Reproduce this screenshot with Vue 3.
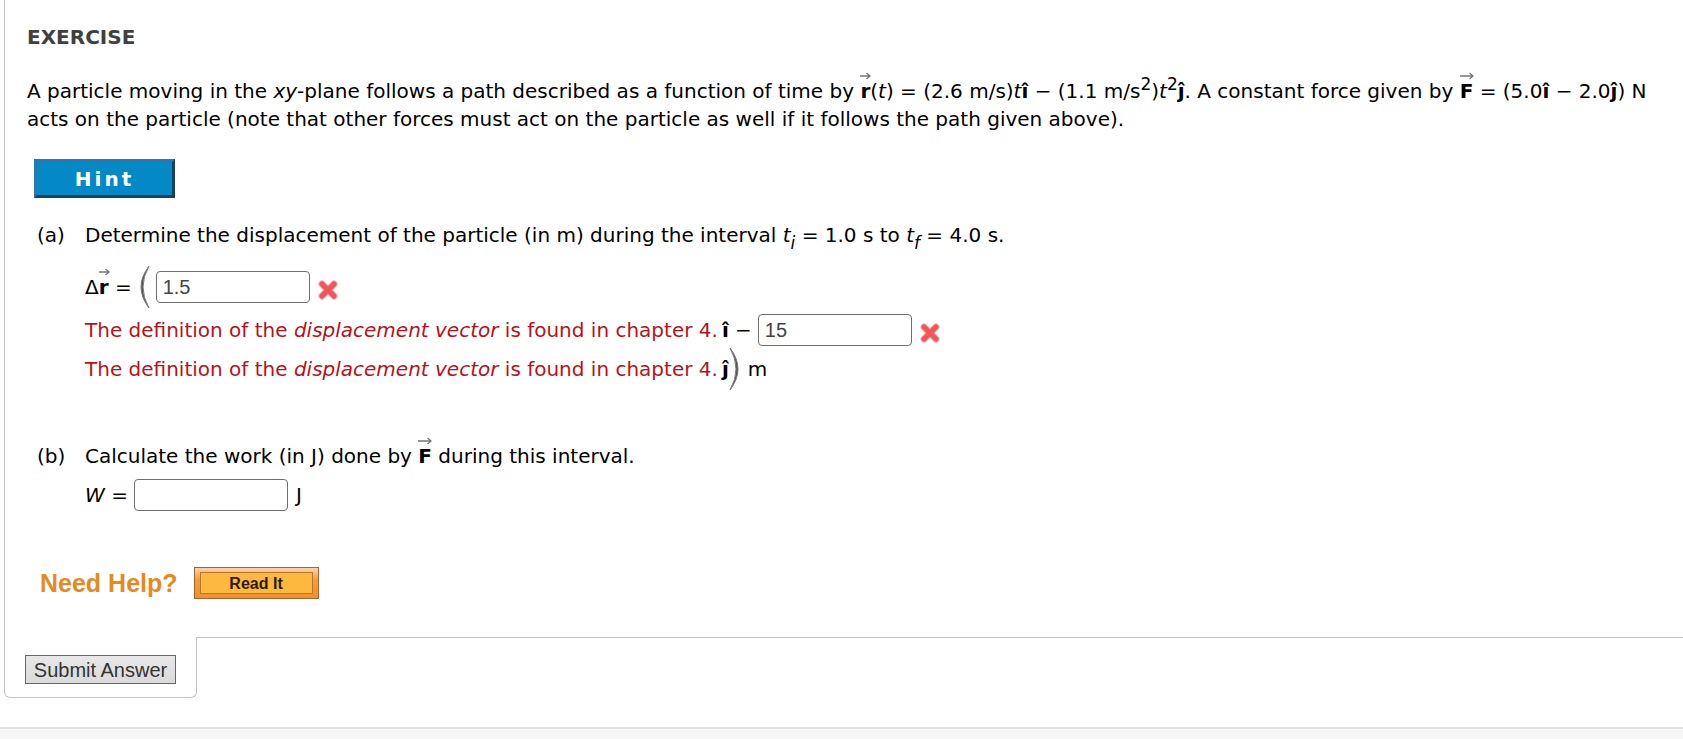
<script setup>
import { ref } from 'vue'

const answerI = ref('1.5')
const answerJ = ref('15')
const work = ref('')
</script>

<template>
  <div class="page">
    <svg class="defs" width="0" height="0" aria-hidden="true">
      <symbol id="arrow-short" viewBox="0 0 11 8">
        <path d="M0 4H10M6.5 1L10 4L6.5 7" fill="none" stroke="#777" stroke-width="1.3" />
      </symbol>
      <symbol id="arrow-long" viewBox="0 0 14 8">
        <path d="M0 4H13M9.5 1L13 4L9.5 7" fill="none" stroke="#777" stroke-width="1.3" />
      </symbol>
      <symbol id="wrong" viewBox="0 0 20 20">
        <path d="M4 4L16 16M16 4L4 16" fill="none" stroke="#f9a5a5" stroke-width="7" stroke-linecap="round" />
        <path d="M4 4L16 16M16 4L4 16" fill="none" stroke="#f05558" stroke-width="5" stroke-linecap="round" />
      </symbol>
      <symbol id="paren" viewBox="0 0 11 44">
        <path d="M10 1Q-6 22 10 43Q-2 22 10 1Z" fill="#555" stroke="#777" stroke-width="1" />
      </symbol>
    </svg>

    <main class="question">
      <h1>EXERCISE</h1>
      <p class="statement">
        A particle moving in the <i>xy</i>-plane follows a path described as a function of time by
        <span class="nowrap"><b class="vec">r<svg class="short"><use href="#arrow-short" /></svg></b>(<i>t</i>) = (2.6 m/s)<i>t</i><b>î</b> − (1.1 m/s<sup>2</sup>)<i>t</i><sup>2</sup><b>ĵ</b>.</span>
        A constant force given by
        <span class="nowrap"><b class="vec">F<svg class="long"><use href="#arrow-long" /></svg></b> = (5.0<b>î</b> − 2.0<b>ĵ</b>) N</span>
        acts on the particle (note that other forces must act on the particle as well if it follows the path given above).
      </p>
      <button type="button" class="hint">Hint</button>

      <section class="part">
        <span>(a)</span>
        <div>
          <p>Determine the displacement of the particle (in m) during the interval <i>t<sub>i</sub></i> = 1.0 s to <i>t<sub>f</sub></i> = 4.0 s.</p>
          <div class="row first">
            <label for="ans-i">Δ<b class="vec">r<svg class="short"><use href="#arrow-short" /></svg></b> =</label>
            <svg class="paren open"><use href="#paren" /></svg>
            <input id="ans-i" v-model="answerI" type="text">
            <svg class="wrong" role="img" aria-label="Incorrect"><use href="#wrong" /></svg>
          </div>
          <div class="row second">
            <span class="feedback">The definition of the <i>displacement vector</i> is found in chapter 4.</span>
            <label for="ans-j"><b>î</b> −</label>
            <input id="ans-j" v-model="answerJ" type="text">
            <svg class="wrong" role="img" aria-label="Incorrect"><use href="#wrong" /></svg>
          </div>
          <div class="row third">
            <span class="feedback">The definition of the <i>displacement vector</i> is found in chapter 4.</span>
            <b>ĵ</b>
            <svg class="paren close"><use href="#paren" /></svg>
            <span class="unit">m</span>
          </div>
        </div>
      </section>

      <section class="part">
        <span>(b)</span>
        <div>
          <p>Calculate the work (in J) done by <b class="vec">F<svg class="long"><use href="#arrow-long" /></svg></b> during this interval.</p>
          <div class="row work">
            <label for="ans-w"><i>W</i> =</label>
            <input id="ans-w" v-model="work" type="text">
            <span class="unit">J</span>
          </div>
        </div>
      </section>

      <div class="help">
        <strong>Need Help?</strong>
        <button type="button" class="read"><span>Read It</span></button>
      </div>
    </main>

    <div class="bottom">
      <div class="tab"><button type="submit" class="submit">Submit Answer</button></div>
      <div class="edge"></div>
    </div>
    <footer></footer>
  </div>
</template>

<style>
body {
  margin: 0;
  background: #fff;
}
</style>

<style scoped>
.page {
  box-sizing: border-box;
  min-height: 100vh;
  display: flex;
  flex-direction: column;
  font: 20px/28px Verdana, "DejaVu Sans", sans-serif;
  color: #000;
}
.defs {
  position: absolute;
}
.question {
  margin-left: 4px;
  padding: 23px 22px 38px;
  border-left: 1px solid #c4c4c4;
}
h1 {
  margin: 0 0 26px;
  font-size: 20px;
  line-height: 28px;
  color: #404040;
}
p {
  margin: 0;
}
.nowrap {
  white-space: nowrap;
}
sup,
sub {
  font-size: 17px;
  line-height: 0;
}
sub {
  vertical-align: -7px;
}
.vec {
  position: relative;
}
.vec svg {
  position: absolute;
  left: 0;
  top: -7px;
  height: 8px;
}
.short {
  width: 11px;
}
.long {
  width: 14px;
}
.hint {
  display: block;
  box-sizing: border-box;
  width: 141px;
  height: 39px;
  margin: 26px 0 23px 7px;
  padding: 0;
  border: 3px solid;
  border-color: #2a79ae #14425f #14425f #2a79ae;
  background: #0488c6;
  color: #fff;
  font: bold 20px/28px Verdana, "DejaVu Sans", sans-serif;
  letter-spacing: 3px;
}
.part {
  display: grid;
  grid-template-columns: 48px 1fr;
  margin-left: 10px;
  margin-bottom: 56px;
}
.part:first-of-type {
  margin-bottom: 55px;
}
.row {
  display: flex;
  align-items: center;
}
.first {
  height: 44px;
  margin-top: 16px;
}
.second {
  height: 42px;
}
.third {
  height: 36px;
}
.work {
  height: 32px;
  margin-top: 9px;
}
.row input {
  box-sizing: border-box;
  width: 154px;
  height: 32px;
  margin-left: 6px;
  padding: 0 6px;
  border: 1px solid #6f6f6f;
  border-radius: 4px;
  background: #fff;
  color: #444;
  font: 20px "Liberation Sans", Arial, sans-serif;
}
.feedback {
  margin-right: 4px;
  color: #b8111b;
}
.paren {
  flex: none;
  width: 11px;
  height: 44px;
}
.open {
  margin-left: 7px;
}
.close {
  transform: scaleX(-1);
}
.wrong {
  width: 20px;
  height: 20px;
  margin: 6px 0 0 8px;
}
.unit {
  margin-left: 8px;
}
.help {
  display: flex;
  align-items: center;
  gap: 16px;
  margin-left: 13px;
}
.help strong {
  font: bold 25px/32px "Liberation Sans", Arial, sans-serif;
  color: #e58a1c;
}
.read {
  box-sizing: border-box;
  display: flex;
  width: 125px;
  height: 32px;
  padding: 4px 5px;
  border: 1px solid #a0662a;
  background: linear-gradient(#fbd3ae, #f79a3a 40%, #f0912f);
  color: #2b1a00;
  font: bold 16px/22px "Liberation Sans", Arial, sans-serif;
}
.read span {
  flex: 1;
  height: 20px;
  border: 1px solid #b9772a;
  background: #fdb840;
}
.bottom {
  display: flex;
  margin-left: 4px;
}
.tab {
  padding: 18px 20px 13px;
  border: 1px solid #c4c4c4;
  border-top: 0;
  border-radius: 0 0 6px 6px;
}
.edge {
  flex: 1;
  border-top: 1px solid #c4c4c4;
}
.submit {
  display: block;
  box-sizing: border-box;
  width: 151px;
  height: 29px;
  padding: 0;
  border: 1px solid #666;
  background: linear-gradient(#e8e8e8, #dadada);
  color: #333;
  font: 20px/24px "Liberation Sans", Arial, sans-serif;
}
footer {
  flex: 1;
  min-height: 8px;
  margin-top: 29px;
  border-top: 2px solid #e2e2e2;
  background: #f7f7f7;
}
</style>
